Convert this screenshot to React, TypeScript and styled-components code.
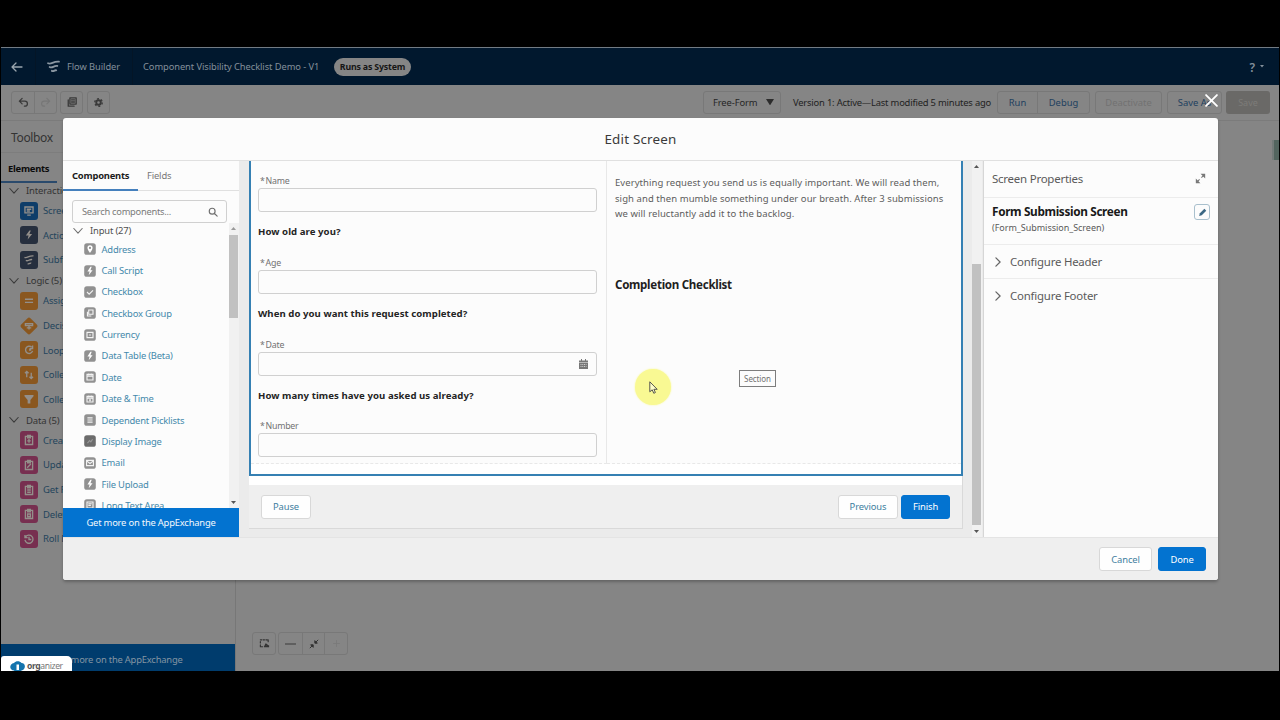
import React from "react";
import styled, { createGlobalStyle, css } from "styled-components";

const Global = createGlobalStyle`
  * { box-sizing: border-box; }
  html, body { margin: 0; background: #000; }
  body { font-family: "Noto Sans", "Open Sans", sans-serif; font-size: 9.4px; color: #5a5a5a; overflow: hidden; }
  svg { display: block; flex: none; }
`;

const Page = styled.div`
  width: 1280px; height: 720px; padding: 47px 1px 49px; background: #000; position: relative;
`;
const Builder = styled.div`
  height: 624px; background: #858585; border-top: 1px solid #727b84;
  display: flex; flex-direction: column; overflow: hidden;
`;
const TopBar = styled.header`
  height: 37px; flex: none; background: #01182e; color: #84909b;
  display: flex; align-items: center; padding: 0 15px 0 10px;
`;
const TopLabel = styled.span<{ $w: number }>`
  width: ${p => p.$w}px; white-space: nowrap; font-size: 9.3px; letter-spacing: -0.06px;
`;
const Gap = styled.i<{ $w: number }>`flex: 0 0 ${p => p.$w}px;`;
const Divider = styled.i`width: 1px; height: 37px; background: #041526;`;
const Pill = styled.span`
  height: 18px; width: 77px; border-radius: 9px; background: #858585; color: #161616; font-weight: 700;
  font-size: 8.8px; display: flex; align-items: center; justify-content: center; white-space: nowrap; letter-spacing: -0.18px;
`;
const Spacer = styled.div`flex: 1;`;
const Help = styled.span`font-weight: 600; font-size: 12px; color: #84909b; margin: 2px 5px 0 0;`;

const ToolBar = styled.div`
  height: 36px; flex: none; border-bottom: 1px solid #7b7b7b; display: flex; align-items: center; padding: 0 9px 1px 10px;
`;
const Group = styled.div<{ $ml?: number }>`
  display: flex; height: 23px; border: 1px solid #787878; border-radius: 3px; margin-left: ${p => p.$ml ?? 0}px;
`;
const Cell = styled.div<{ $w: number; $c?: string }>`
  width: ${p => p.$w}px; display: flex; align-items: center; justify-content: center; white-space: nowrap;
  color: ${p => p.$c ?? "#21405f"}; & + & { border-left: 1px solid #787878; }
`;
const Combo = styled(Group)`
  width: 78px; align-items: center; justify-content: space-between; padding: 0 6px 0 9px; color: #262626; letter-spacing: -0.1px;
`;
const Version = styled.span`color: #222; width: 199px; margin-left: 12px; white-space: nowrap; font-size: 9.4px; letter-spacing: -0.19px;`;
const SaveButton = styled.div`
  width: 44px; height: 23px; margin-left: 4px; border-radius: 3px; background: #6a6967; color: #7d7c79;
  display: flex; align-items: center; justify-content: center; font-size: 9px;
`;

const Work = styled.div`flex: 1; min-height: 0; display: flex;`;
const Toolbox = styled.aside`
  width: 235px; border-right: 1px solid #777; display: flex; flex-direction: column;
`;
const ToolboxTitle = styled.div`
  height: 32px; line-height: 33px; padding-left: 10px; font-size: 12px; letter-spacing: -0.35px; color: #333; border-bottom: 1px solid #7d7d7d;
`;
const ElementsTab = styled.div`
  width: 56px; height: 30px; margin-bottom: -1.4px; line-height: 31px; padding-left: 7px; font-size: 9.4px; font-weight: 700; color: #0b0b0b;
  border-bottom: 2px solid #2a4a6c; letter-spacing: -0.25px;
`;
const Section = styled.div`
  height: 16.4px; display: flex; align-items: center; gap: 7px; padding: 2px 0 0 8px; color: #333; white-space: nowrap; font-size: 9.5px; letter-spacing: -0.15px;
`;
const Element = styled.div`
  height: 24.6px; display: flex; align-items: center; gap: 5px; padding: 1px 0 0 19px; color: #23445c; font-size: 9.5px; white-space: nowrap; letter-spacing: -0.15px;
`;
const AppExchangeDim = styled.div`
  margin-top: auto; height: 27px; background: #003c6d; color: #8394a2; text-align: center; line-height: 31px; font-size: 9.4px; letter-spacing: -0.2px;
`;
const Canvas = styled.main`flex: 1; display: flex; align-items: flex-end; padding: 0 0 16px 16px;`;
const FarTab = styled.div`
  width: 7px; height: 20px; background: #53655f; border-left: 2px solid #737b79; margin-left: auto; align-self: flex-start; margin-top: 19px;
`;

const Organizer = styled.div`
  position: absolute; left: 1px; top: 656px; width: 71px; height: 15px; background: #fff; border-radius: 3px 5px 0 0;
  display: flex; align-items: center; padding: 6px 0 0 9px; gap: 2px; overflow: hidden; color: #777; font-size: 8.6px; line-height: 9px; letter-spacing: -0.4px;
  b { color: #555; }
`;

const Close = styled.div`position: absolute; left: 1205px; top: 94px;`;
const Modal = styled.div`
  position: absolute; left: 63px; top: 118px; width: 1155px; height: 462px; border-radius: 3px; background: #fcfcfc;
  overflow: hidden; display: flex; flex-direction: column; box-shadow: 0 2px 3px rgba(0,0,0,.25);
`;
const ModalTitle = styled.h1`
  margin: 0; height: 43px; flex: none; border-bottom: 1px solid #e0e0e0; font-size: 13.4px; font-weight: 400; color: #3a3a3a;
  text-align: center; line-height: 42px; letter-spacing: 0.2px;
`;
const ModalBody = styled.div`height: 376px; display: flex;`;
const ModalFooter = styled.footer`
  flex: 1; background: #efefef; border-top: 1px solid #e4e4e4; display: flex; justify-content: flex-end; align-items: center; gap: 6px; padding: 0 12px 0 0;
`;
const Button = styled.button<{ $w: number; $primary?: boolean }>`
  width: ${p => p.$w}px; height: 24px; padding: 0; border-radius: 3px; font: inherit; font-size: 9.4px; letter-spacing: -0.1px;
  border: 1px solid #d8d8d8; background: #fefefe; color: #417f9e;
  ${p => p.$primary && css`background: #0373d0; border-color: #0373d0; color: #fff;`}
`;

const Left = styled.div`width: 176px; display: flex; flex-direction: column; background: #fcfcfc;`;
const Tabs = styled.div`height: 30px; display: flex; border-bottom: 1px solid #e0e0e0; line-height: 30px;`;
const Tab = styled.div<{ $on?: boolean }>`
  padding: 0 9px; height: 30px; color: #777; font-size: 9.4px; letter-spacing: -0.15px;
  ${p => p.$on && css`width: 75px; color: #1b1b1b; font-weight: 700; border-bottom: 2px solid #4580bd; letter-spacing: -0.2px;`}
`;
const Search = styled.div`
  margin: 9px 12px 0 9px; height: 23px; border: 1px solid #d0d0d0; border-radius: 3px; display: flex; align-items: center;
  justify-content: space-between; padding: 0 8px 0 9px; color: #7a7a7a; font-size: 9.3px; letter-spacing: -0.25px;
`;
const ListArea = styled.div`height: 285px; display: flex; overflow: hidden;`;
const List = styled.div`flex: 1; overflow: hidden;`;
const ListHead = styled.div`
  height: 15.6px; display: flex; align-items: center; gap: 7px; padding: 0 0 0 10px; color: #505050; font-size: 9.4px; letter-spacing: -0.15px;
`;
const Item = styled.div`
  height: 21.35px; display: flex; align-items: center; gap: 6px; padding-left: 20.5px; color: #4489ab; font-size: 9.4px; white-space: nowrap; letter-spacing: -0.19px;
`;
const Scroll = styled.div<{ $before: number; $thumb: number }>`
  width: 10px; background: #f1f1f1; display: flex; flex-direction: column; align-items: center; justify-content: space-between; padding: 4px 1px 4px 0;
  position: relative;
  &::after { content: ""; position: absolute; left: 0; width: 9px; top: ${p => p.$before}px; height: ${p => p.$thumb}px; background: #c1c1c1; }
`;
const AppExchange = styled.div`
  flex: 1; background: #0373d0; color: #f3f8fc; text-align: center; line-height: 29px; font-size: 9.4px; letter-spacing: -0.2px;
`;

const Center = styled.div`width: 744px; background: #ebebeb; display: flex; padding: 0 1px 0 10px; justify-content: space-between;`;
const Preview = styled.div`
  width: 714px; height: 368px; background: #fff; border: solid #d9d9d9; border-width: 0 1px 1px 0; display: flex; flex-direction: column;
`;
const ScreenForm = styled.div`
  height: 315px; border: 2px solid #3580b3; border-top: 0; background: #fff; display: flex; align-items: flex-start; flex: none; margin-right: -0.6px;
`;
const Fields = styled.div`width: 356px; height: 303px; background: #fcfcfc; border-right: 1px solid #e8e8e8; border-bottom: 1px dashed #e8e8e8; padding: 9.3px 9px 0 7px;`;
const Label = styled.div`
  height: 18px; line-height: 22px; padding-left: 2px; font-size: 8.8px; color: #727272; letter-spacing: -0.25px;
  &::before { content: "*"; margin-right: 1px; }
`;
const Input = styled.div`
  height: 24px; border: 1px solid #d0d0d0; border-radius: 3px; background: #fcfcfc; display: flex; align-items: center; justify-content: flex-end; padding-right: 8px;
`;
const Question = styled.div`height: 39.7px; line-height: 40px; font-size: 9.6px; font-weight: 700; color: #242424; letter-spacing: 0.06px;`;
const Info = styled.div`
  flex: 1; height: 303px; background: #fcfcfc; border-bottom: 1px dashed #e8e8e8; padding: 14px 0 0 8px; color: #5c5c5c;
`;
const Para = styled.p`margin: 0; line-height: 15.6px; font-size: 9.5px; white-space: nowrap; letter-spacing: 0.07px;`;
const Heading = styled.h2`margin: 54px 0 0; font-size: 11.6px; line-height: 18px; font-weight: 700; color: #1f1f1f; letter-spacing: -0.3px;`;
const SectionTag = styled.div`
  margin: 76px 0 0 124px; width: 37px; height: 17px; border: 1px solid #7d7d7d; font-size: 8px; color: #737373; text-align: center; line-height: 16px; letter-spacing: -0.1px;
`;
const NavBar = styled.div`
  margin-top: 9px; flex: 1; background: #efefef; display: flex; align-items: center; padding: 0 12px; gap: 3px;
`;
const Pointer = styled.div`
  position: absolute; left: 635px; top: 369px; width: 36px; height: 36px; border-radius: 50%; background: #f9f993; box-shadow: 0 0 2px #fafa94;
  padding: 12px 0 0 14px;
`;

const Right = styled.div`flex: 1; border-left: 1px solid #d6d6d6; background: #fcfcfc;`;
const PropsTitle = styled.div`
  height: 37px; border-bottom: 1px solid #ececec; display: flex; align-items: center; justify-content: space-between; padding: 0 12px 1px 8px;
  font-size: 11.5px; letter-spacing: -0.25px;
`;
const PropsName = styled.div`
  height: 47px; border-bottom: 1px solid #ececec; display: flex; justify-content: space-between; padding: 5px 8px 0 8px; line-height: 15px; font-size: 9px; white-space: nowrap; letter-spacing: -0.03px;
  b { display: block; font-size: 11.8px; color: #191919; line-height: 16.6px; letter-spacing: -0.35px; }
`;
const EditButton = styled.div`margin-top: 1px; width: 16px; height: 16px; border: 1px solid #a9c0cd; border-radius: 3px; display: flex; align-items: center; justify-content: center;`;
const Config = styled.div`
  height: 33.2px; display: flex; align-items: center; gap: 7px; padding: 0 0 0 9px; font-size: 11.4px; letter-spacing: -0.2px;
  & + & { border-top: 1px solid #ececec; padding-top: 1px; }
`;

type IconProps = { d: string; s?: number; c?: string; w?: number; fill?: boolean };
const Icon = ({ d, s = 12, c = "#555", w = 2, fill }: IconProps) => (
  <svg width={s} height={s} viewBox="0 0 24 24" fill={fill ? c : "none"} stroke={fill ? "none" : c} strokeWidth={w} strokeLinecap="round" strokeLinejoin="round"><path d={d} /></svg>
);
const FLOW = "M2 6c6 3 9-4 20-3M5 13c5 3 7-3 14-2M9 20c4 2 5-2 8-1";
const DOWN = "M2 6l10 11L22 6";
const RIGHT = "M7 2l10 10L7 22";
const BOLT = "M13 2L5 13h6l-2 9 10-12h-6l3-8z";

const Expand = ({ c, s = 11, inward }: { c: string; s?: number; inward?: boolean }) => (
  <svg width={s} height={s} viewBox="0 0 24 24" fill={c} stroke={c} strokeWidth="2.4">
    <path d={inward ? "M22 2l-6 6M14 4v6h6zM2 22l6-6M10 20v-6H4z" : "M14 10l5-5M15 3h6v6zM10 14l-5 5M3 15v6h6z"} />
  </svg>
);

type TileData = { t: string; c: string; d: string; diamond?: boolean; fill?: boolean };
const Tile = ({ c, d, diamond, fill }: TileData) => (
  <svg width="18" height="18" viewBox="0 0 36 36">
    {diamond ? <rect x="5" y="5" width="26" height="26" rx="4" transform="rotate(45 18 18)" fill={c} /> : <rect width="36" height="36" rx="6" fill={c} />}
    <path d={d} transform="translate(7.2 7.2) scale(.9)" fill={fill ? "#938f8a" : "none"} stroke={fill ? "none" : "#938f8a"} strokeWidth="3" />
  </svg>
);
const BLUE = "#0e3d69", NAVY = "#262f3e", ORANGE = "#8a571f", PINK = "#772f50";
const CLIP = "M4 4h16v18H4zM9 2h6v5H9z";
const groups: { name: string; items: TileData[] }[] = [
  { name: "Interaction (3)", items: [
    { t: "Screen", c: BLUE, d: "M3 3h18v13H3zM7 8h10M7 12h7M8 21h8" },
    { t: "Action", c: NAVY, d: BOLT, fill: true },
    { t: "Subflow", c: NAVY, d: FLOW }] },
  { name: "Logic (5)", items: [
    { t: "Assignment", c: ORANGE, d: "M3 8h18M3 15h18" },
    { t: "Decision", c: ORANGE, d: "M4 7h16v4H4zM7 16h10M12 11v9", diamond: true },
    { t: "Loop", c: ORANGE, d: "M18 6a8 8 0 1 0 2 8M20 2v7h-7M17 12h-5" },
    { t: "Collection Sort", c: ORANGE, d: "M7 17V4M3 8l4-4 4 4M17 7v13M13 16l4 4 4-4" },
    { t: "Collection Filter", c: ORANGE, d: "M2 3h20v3l-7 8v8H9v-8L2 6z", fill: true }] },
  { name: "Data (5)", items: [
    { t: "Create Records", c: PINK, d: CLIP + "M8 14h8M12 10v8" },
    { t: "Update Records", c: PINK, d: CLIP + "M8 18l8-8" },
    { t: "Get Records", c: PINK, d: CLIP + "M8 12h8M8 17h8" },
    { t: "Delete Records", c: PINK, d: CLIP + "M9 12h6v6H9z" },
    { t: "Roll Back Records", c: PINK, d: "M4 8a9 9 0 1 1-1 6M3 3v6h6M12 7v6h5" }] },
];
const CAL = "M7 8h14v13H7zM7 12h14M11 6v4M17 6v4";
const SPARK = "M15 4L8 15h5l-2 9 9-12h-5l3-8z";
const items: [string, string, boolean?][] = [
  ["Address", "M14 5a6 6 0 0 0-6 6c0 5 6 12 6 12s6-7 6-12a6 6 0 0 0-6-6zm0 4a2 2 0 1 1 0 5 2 2 0 0 1 0-5z", true],
  ["Call Script", SPARK, true],
  ["Checkbox", "M7 14l5 5 9-9"],
  ["Checkbox Group", "M11 7h10v10H11zM8 11v10h9"],
  ["Currency", "M7 8h14v12H7zM12 14h4"],
  ["Data Table (Beta)", SPARK, true],
  ["Date", CAL],
  ["Date & Time", CAL + "M14 14v5M12 17h4"],
  ["Dependent Picklists", "M8 9h12M8 14h12M8 19h12"],
  ["Display Image", "M8 19l5-6 3 3 4-6"],
  ["Email", "M6 8h16v12H6zM6 9l8 6 8-6"],
  ["File Upload", SPARK, true],
  ["Long Text Area", "M7 7h14v14H7zM10 11h8M10 15h6"],
];
const Badge = ({ d, fill, dark }: { d: string; fill?: boolean; dark?: boolean }) => (
  <svg width="12" height="12" viewBox="0 0 28 28">
    <rect x="0.5" y="0.5" width="27" height="27" rx="6" fill={dark ? "#6c6c6c" : "#919191"} />
    <path d={d} fill={fill ? "#fff" : "none"} fillRule="evenodd" stroke={fill ? "none" : dark ? "#999" : "#f4f4f4"} strokeWidth="2.6" />
  </svg>
);
const Arrow = ({ up, c = "#555", w = 5, r = 0.6 }: { up?: boolean; c?: string; w?: number; r?: number }) => (
  <svg width={w} height={w * r} viewBox="0 0 10 6" preserveAspectRatio="none"><path d={up ? "M0 6h10L5 0z" : "M0 0h10L5 6z"} fill={c} /></svg>
);

export default function App() {
  return (
    <Page>
      <Global />
      <Builder>
        <TopBar>
          <Icon d="M22 12H3M10 4l-8 8 8 8" s={12} c="#9aa5ae" w={2.6} />
          <Gap $w={12} /><Divider /><Gap $w={11} />
          <Icon d={FLOW} s={13} c="#8b97a2" w={3.4} />
          <Gap $w={7} />
          <TopLabel $w={65}>Flow Builder</TopLabel><Divider />
          <Gap $w={10} />
          <TopLabel $w={191}>Component Visibility Checklist Demo - V1</TopLabel>
          <Pill>Runs as System</Pill>
          <Spacer />
          <Help>?</Help><Arrow c="#84909b" w={4} />
        </TopBar>
        <ToolBar>
          <Group>
            <Cell $w={22}><Icon d="M9 3L3 9l6 6M3 9h12a5 5 0 0 1 0 11h-1" c="#3a3a3a" s={11} w={2.8} /></Cell>
            <Cell $w={22}><Icon d="M15 3l6 6-6 6M21 9H9a5 5 0 0 0 0 11h1" c="#777" s={11} w={2.5} /></Cell>
          </Group>
          <Group $ml={3}><Cell $w={21}><Icon d="M7 2h15v15H7zM3 7v15h14M11 7h7M11 12h7" c="#3a3a3a" s={10} w={3.2} /></Cell></Group>
          <Group $ml={4}><Cell $w={21}>
            <svg width="9" height="9" viewBox="0 0 24 24" fill="none" stroke="#3a3a3a"><circle cx="12" cy="12" r="6" strokeWidth="5" /><circle cx="12" cy="12" r="10" strokeWidth="3.5" strokeDasharray="5.2 5.27" /></svg>
          </Cell></Group>
          <Spacer />
          <Combo>Free-Form<Arrow c="#2c2c2c" w={8} r={0.8} /></Combo>
          <Version>Version 1: Active—Last modified 5 minutes ago</Version>
          <Group $ml={5}><Cell $w={39}>Run</Cell><Cell $w={52}>Debug</Cell></Group>
          <Group $ml={5}><Cell $w={65} $c="#727272">Deactivate</Cell></Group>
          <Group $ml={5}><Cell $w={53}>Save As</Cell></Group>
          <SaveButton>Save</SaveButton>
        </ToolBar>
        <Work>
          <Toolbox>
            <ToolboxTitle>Toolbox</ToolboxTitle>
            <ElementsTab>Elements</ElementsTab>
            {groups.map(g => (
              <React.Fragment key={g.name}>
                <Section><Icon d={DOWN} s={10} c="#3a3a3a" w={2.6} />{g.name}</Section>
                {g.items.map(i => <Element key={i.t}><Tile {...i} />{i.t}</Element>)}
              </React.Fragment>
            ))}
            <AppExchangeDim>Get more on the AppExchange</AppExchangeDim>
          </Toolbox>
          <Canvas>
            <Group><Cell $w={22}><Icon d="M3 4h3M9 4h3M15 4h3M20 4v4M3 8v3M3 15v4h5M12 19l3-6 4 3 2 3zM13 17h8" c="#333" s={11} w={2.5} /></Cell></Group>
            <Group $ml={2}>
              <Cell $w={23}><Icon d="M1 13h22" c="#3a3a3a" s={11} w={2.5} /></Cell>
              <Cell $w={22}><Expand c="#333" s={10} inward /></Cell>
              <Cell $w={23}><Icon d="M4 12h16M12 4v16" c="#787878" s={9} w={2} /></Cell>
            </Group>
          </Canvas>
          <FarTab />
        </Work>
      </Builder>
      <Organizer>
        <svg width="15" height="12" viewBox="0 0 30 24"><path d="M8 4C12-1 20 0 23 4c9 0 9 13 0 15-3 5-12 5-15 0C-2 18-2 6 8 4z" fill="#1474ad" /><path d="M13 7h5v11h-5z" fill="#fff" /></svg>
        <span><b>org</b>anizer</span>
      </Organizer>
      <Modal>
        <ModalTitle>Edit Screen</ModalTitle>
        <ModalBody>
          <Left>
            <Tabs><Tab $on>Components</Tab><Tab>Fields</Tab></Tabs>
            <Search>Search components...<Icon d="M10 3a7 7 0 1 0 0 14 7 7 0 0 0 0-14zM15 15l7 7" s={10} c="#707070" w={2.8} /></Search>
            <ListArea>
              <List>
                <ListHead><Icon d={DOWN} s={10} c="#707070" w={2.6} />Input (27)</ListHead>
                {items.map(([t, d, f]) => <Item key={t}><Badge d={d} fill={f} dark={t === "Display Image"} />{t}</Item>)}
              </List>
              <Scroll $before={12} $thumb={83}><Arrow up c="#999" /><Arrow /></Scroll>
            </ListArea>
            <AppExchange>Get more on the AppExchange</AppExchange>
          </Left>
          <Center>
            <Preview>
              <ScreenForm>
                <Fields>
                  <Label>Name</Label><Input />
                  <Question>How old are you?</Question>
                  <Label>Age</Label><Input />
                  <Question>When do you want this request completed?</Question>
                  <Label>Date</Label>
                  <Input><svg width="9" height="10" viewBox="0 0 18 20"><path d="M0 3h18v4H0zM4 0h2v4H4zM12 0h2v4h-2zM0 8h18v12H0z" fill="#777" /><path d="M3 11h12M3 15h12" stroke="#ccc" strokeWidth="2" strokeDasharray="2 1.5" /></svg></Input>
                  <Question>How many times have you asked us already?</Question>
                  <Label>Number</Label><Input />
                </Fields>
                <Info>
                  <Para>Everything request you send us is equally important. We will read them,<br />sigh and then mumble something under our breath. After 3 submissions<br />we will reluctantly add it to the backlog.</Para>
                  <Heading>Completion Checklist</Heading>
                  <SectionTag>Section</SectionTag>
                </Info>
              </ScreenForm>
              <NavBar><Button $w={50}>Pause</Button><Spacer /><Button $w={60}>Previous</Button><Button $w={49} $primary>Finish</Button></NavBar>
            </Preview>
            <Scroll $before={103} $thumb={261}><Arrow up /><Arrow /></Scroll>
          </Center>
          <Right>
            <PropsTitle>Screen Properties<Expand c="#777" /></PropsTitle>
            <PropsName>
              <div><b>Form Submission Screen</b>(Form_Submission_Screen)</div>
              <EditButton><Icon d="M3 21l2-7L17 2l5 5L10 19z" s={9} c="#3c6884" fill /></EditButton>
            </PropsName>
            <Config><Icon d={RIGHT} s={10} c="#666" w={3} />Configure Header</Config>
            <Config><Icon d={RIGHT} s={10} c="#666" w={3} />Configure Footer</Config>
          </Right>
        </ModalBody>
        <ModalFooter><Button $w={53}>Cancel</Button><Button $w={48} $primary>Done</Button></ModalFooter>
      </Modal>
      <Close><Icon d="M2 2l20 20M22 2L2 22" s={13} c="#fff" w={3.4} /></Close>
      <Pointer>
        <svg width="9" height="13" viewBox="0 0 9 13"><path d="M.8.8v10l2.4-2 1.6 3.5 1.6-.8-1.5-3.2h3.3z" fill="#fdfdc8" stroke="#444" strokeWidth=".9" /></svg>
      </Pointer>
    </Page>
  );
}
